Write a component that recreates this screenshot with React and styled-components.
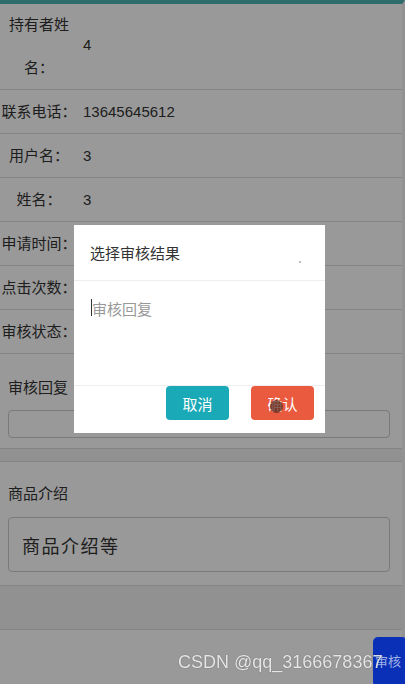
import React from "react";
import styled, { createGlobalStyle } from "styled-components";

const C = {
  text: "#333",
  line: "#ddd",
  teal: "#4db3b3",
  cancel: "#1aa9b6",
  confirm: "#e95a3e",
  blue: "#0b30b8",
};

const Global = createGlobalStyle`
  html, body { margin: 0; padding: 0; background: #fff; }
  body {
    font-family: "Liberation Sans", "Noto Sans CJK SC", sans-serif;
    color: ${C.text};
    overflow: hidden;
  }
`;

const Page = styled.div`
  width: 405px;
  height: 684px;
  display: flex;
  flex-direction: column;
  border-top: 4px solid ${C.teal};
  box-sizing: border-box;
  background: #fff;
  border-right: 3px solid #f4f4f4;
`;

const Row = styled.div`
  display: flex;
  border-bottom: 1px solid ${C.line};
  min-height: 43px;
`;

const Label = styled.div`
  width: 78px;
  flex: 0 0 78px;
  text-align: center;
  font-size: 15px;
  line-height: ${p => p.$lh || 43}px;
`;

const Value = styled.div`
  flex: 1;
  padding-left: 5px;
  font-size: 15px;
  display: flex;
  align-items: center;
  padding-bottom: ${p => p.$pb || 0}px;
`;

const Section = styled.div`
  padding: ${p => p.$pad};
  border-bottom: 1px solid ${C.line};
  display: flex;
  flex-direction: column;
`;

const SecLabel = styled.div`
  font-size: 15px;
  line-height: 20px;
`;

const Input = styled.div`
  margin-top: ${p => p.$mt}px;
  width: 382px;
  height: ${p => p.$h}px;
  box-sizing: border-box;
  border: 1px solid #ccc;
  border-radius: 4px;
  padding-left: 13px;
  display: flex;
  align-items: center;
  font-size: 18px;
  letter-spacing: 1.5px;
  color: #333;
`;

const Gap = styled.div`
  height: ${p => p.$h}px;
  background: #f2f2f2;
  border-bottom: 1px solid ${C.line};
`;

const Bottom = styled.div`
  flex: 1;
`;

const Overlay = styled.div`
  position: fixed;
  inset: 0;
  background: rgba(0, 0, 0, 0.4);
`;

const Modal = styled.div`
  position: fixed;
  left: 74px;
  top: 225px;
  width: 251px;
  height: 208px;
  background: #fff;
  display: flex;
  flex-direction: column;
`;

const MTitle = styled.div`
  height: 55px;
  border-bottom: 1px solid #eee;
  display: flex;
  align-items: center;
  padding-left: 16px;
  font-size: 15px;
  color: #333;
  position: relative;
  &::after {
    content: "";
    position: absolute;
    right: 24px;
    top: 36px;
    width: 2px;
    height: 2px;
    background: #bbb;
  }
`;

const MBody = styled.div`
  height: 105px;
  border-bottom: 1px solid #eee;
  padding: 17px 0 0 17px;
  box-sizing: border-box;
  font-size: 15px;
  color: #999;
  display: flex;
  align-items: flex-start;
`;

const Caret = styled.span`
  display: inline-block;
  width: 1px;
  height: 17px;
  background: #333;
  margin-top: 1px;
`;

const MFoot = styled.div`
  display: flex;
  justify-content: flex-end;
  gap: 22px;
  padding-right: 11px;
`;

const Btn = styled.div`
  width: 63px;
  height: 34px;
  border-radius: 4px;
  background: ${p => p.$bg};
  color: #fff;
  font-size: 15px;
  display: flex;
  align-items: center;
  justify-content: center;
  position: relative;
`;

const Touch = styled.span`
  position: absolute;
  left: 19px;
  top: 14px;
  width: 13px;
  height: 13px;
  border-radius: 50%;
  background: rgba(90, 40, 30, 0.75);
`;

const Audit = styled.div`
  position: fixed;
  left: 373px;
  top: 637px;
  width: 34px;
  height: 50px;
  border-radius: 5px;
  background: ${C.blue};
  color: #9fb0e6;
  font-size: 13px;
  padding: 14px 0 0 2px;
  box-sizing: border-box;
`;

const Mark = styled.div`
  position: fixed;
  left: 178px;
  top: 652px;
  font-size: 18px;
  color: rgba(255, 255, 255, 0.85);
  text-shadow: 0 0 1px rgba(0, 0, 0, 0.5);
`;

const rows = [
  ["联系电话：", "13645645612"],
  ["用户名：", "3"],
  ["姓名：", "3"],
  ["申请时间：", ""],
  ["点击次数：", ""],
  ["审核状态：", ""],
];

export default function App() {
  return (
    <>
      <Global />
      <Page>
        <Row>
          <Label $lh={42.5}>持有者姓名：</Label>
          <Value $pb={4}>4</Value>
        </Row>
        {rows.map(([l, v]) => (
          <Row key={l}>
            <Label>{l}</Label>
            <Value>{v}</Value>
          </Row>
        ))}
        <Section $pad="24px 8px 10px">
          <SecLabel>审核回复</SecLabel>
          <Input $mt={12} $h={28} />
        </Section>
        <Gap $h={12} />
        <Section $pad="22px 8px 13px">
          <SecLabel>商品介绍</SecLabel>
          <Input $mt={13} $h={55}>商品介绍等</Input>
        </Section>
        <Gap $h={43} />
        <Bottom />
      </Page>
      <Overlay />
      <Modal>
        <MTitle>选择审核结果</MTitle>
        <MBody>
          <Caret />
          审核回复
        </MBody>
        <MFoot>
          <Btn $bg={C.cancel}>取消</Btn>
          <Btn $bg={C.confirm}>
            确认
            <Touch />
          </Btn>
        </MFoot>
      </Modal>
      <Audit>审核</Audit>
      <Mark>CSDN @qq_3166678367</Mark>
    </>
  );
}
